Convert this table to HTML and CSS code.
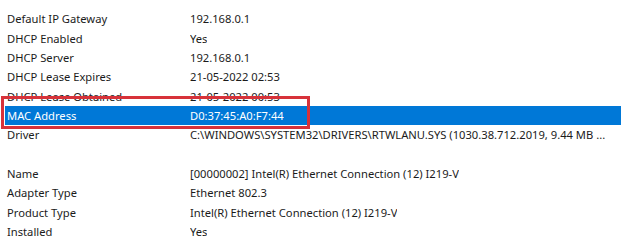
FILE: index.html
```html
<!DOCTYPE html>
<html lang="en">
<head>
    <meta charset="UTF-8">
    <title>Adapter Properties</title>
    <link rel="stylesheet" href="styles.css">
</head>
<body>
    <div class="props">
        <div class="row"><span class="key">Default IP Gateway</span><span class="val">192.168.0.1</span></div>
        <div class="row"><span class="key">DHCP Enabled</span><span class="val">Yes</span></div>
        <div class="row"><span class="key">DHCP Server</span><span class="val">192.168.0.1</span></div>
        <div class="row"><span class="key">DHCP Lease Expires</span><span class="val">21-05-2022 02:53</span></div>
        <div class="row"><span class="key">DHCP Lease Obtained</span><span class="val">21-05-2022 00:53</span></div>
        <div class="row selected"><span class="key">MAC Address</span><span class="val">D0:37:45:A0:F7:44</span></div>
        <div class="row"><span class="key">Driver</span><span class="val">C:\WINDOWS\SYSTEM32\DRIVERS\RTWLANU.SYS (1030.38.712.2019, 9.44 MB ...</span></div>
        <div class="row"></div>
        <div class="row"><span class="key">Name</span><span class="val">[00000002] Intel(R) Ethernet Connection (12) I219-V</span></div>
        <div class="row"><span class="key">Adapter Type</span><span class="val">Ethernet 802.3</span></div>
        <div class="row"><span class="key">Product Type</span><span class="val">Intel(R) Ethernet Connection (12) I219-V</span></div>
        <div class="row"><span class="key">Installed</span><span class="val">Yes</span></div>

        <!-- annotation drawn over the list -->
        <div class="callout"></div>
    </div>
</body>
</html>
```

FILE: styles.css
```css
* {
    box-sizing: border-box;
    margin: 0;
    padding: 0;
}

body {
    font-family: "Noto Sans", "Open Sans", sans-serif;
    font-size: 11.2px;
    color: #1b1b1b;
    background-color: #ffffff;
    width: 640px;
    height: 240px;
    overflow: hidden;
}

.props {
    position: relative;
    padding-top: 9px;
}

.row {
    display: flex;
    align-items: center;
    height: 19.35px;
    margin: 0 19px 0 5px;
    padding-left: 2px;
    white-space: nowrap;
}

.key {
    width: 183px;
    flex-shrink: 0;
}

.val {
    overflow: hidden;
}

.row.selected {
    background-color: #0078d7;
    color: #ffffff;
}

.callout {
    position: absolute;
    left: 1px;
    top: 96px;
    width: 309px;
    height: 33px;
    border: 3px solid #d7323a;
}
```
